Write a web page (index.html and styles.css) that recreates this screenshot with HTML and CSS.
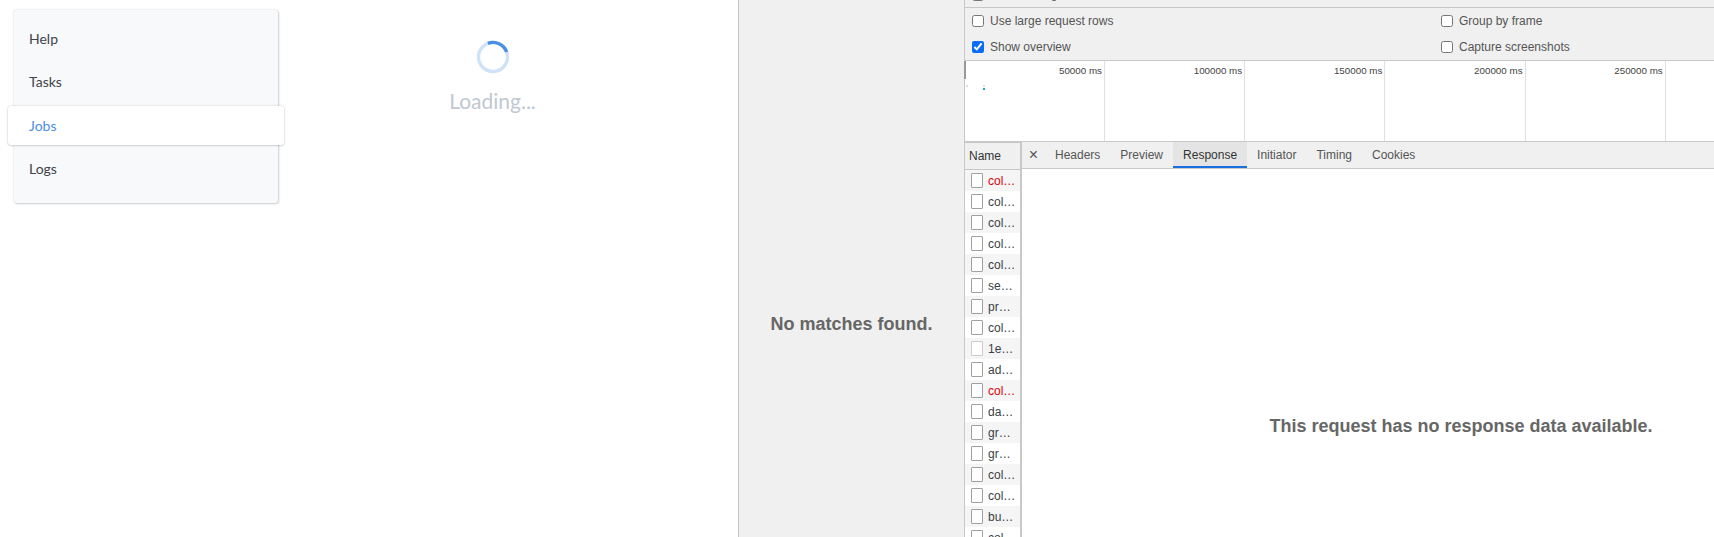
FILE: index.html
```html
<!DOCTYPE html>
<html lang="en">
<head>
<meta charset="utf-8">
<title>Jobs</title>
<link rel="stylesheet" href="styles.css">
</head>
<body>
<div class="page">
  <section class="app">
    <nav class="menu">
      <a class="menu-item">Help</a>
      <a class="menu-item">Tasks</a>
      <a class="menu-item active">Jobs</a>
      <a class="menu-item">Logs</a>
    </nav>
    <div class="loader">
      <svg class="spinner" width="34" height="34" viewBox="0 0 34 34">
        <circle cx="17" cy="17" r="14.5" fill="none" stroke="#cfe3f8" stroke-width="3.4"/>
        <path d="M11.9 3.4A14.5 14.5 0 0 1 30.7 12" fill="none" stroke="#4a90e2" stroke-width="3.4"/>
      </svg>
      <div class="loading-text">Loading...</div>
    </div>
  </section>
  <section class="devtools">
    <div class="side-empty"><span>No matches found.</span></div>
    <div class="main">
      <div class="clip-row">
        <div class="clip-inner"><input type="checkbox"><span>Preserve log</span></div>
      </div>
      <div class="settings">
        <div class="setting-col">
          <label class="setting"><input type="checkbox">Use large request rows</label>
          <label class="setting"><input type="checkbox" checked>Show overview</label>
        </div>
        <div class="setting-col">
          <label class="setting"><input type="checkbox">Group by frame</label>
          <label class="setting"><input type="checkbox">Capture screenshots</label>
        </div>
      </div>
      <div class="overview">
        <div class="tick first">50000 ms</div>
        <div class="tick">100000 ms</div>
        <div class="tick">150000 ms</div>
        <div class="tick">200000 ms</div>
        <div class="tick">250000 ms</div>
        <div class="handle"></div>
        <div class="dot dot-grey"></div>
        <div class="dot dot-grey dot-second"></div>
        <div class="dot dot-teal"></div>
      </div>
      <div class="panes">
        <div class="names">
          <div class="name-head">Name</div>
          <div class="row err"><i class="file"></i><span>col…</span></div>
          <div class="row"><i class="file"></i><span>col…</span></div>
          <div class="row"><i class="file"></i><span>col…</span></div>
          <div class="row"><i class="file"></i><span>col…</span></div>
          <div class="row"><i class="file"></i><span>col…</span></div>
          <div class="row"><i class="file"></i><span>se…</span></div>
          <div class="row"><i class="file"></i><span>pr…</span></div>
          <div class="row"><i class="file"></i><span>col…</span></div>
          <div class="row"><i class="file img"></i><span>1e…</span></div>
          <div class="row"><i class="file"></i><span>ad…</span></div>
          <div class="row err"><i class="file"></i><span>col…</span></div>
          <div class="row"><i class="file"></i><span>da…</span></div>
          <div class="row"><i class="file"></i><span>gr…</span></div>
          <div class="row"><i class="file"></i><span>gr…</span></div>
          <div class="row"><i class="file"></i><span>col…</span></div>
          <div class="row"><i class="file"></i><span>col…</span></div>
          <div class="row"><i class="file"></i><span>bu…</span></div>
          <div class="row"><i class="file"></i><span>col…</span></div>
        </div>
        <div class="detail">
          <div class="tabs">
            <span class="close">×</span>
            <span class="tab">Headers</span>
            <span class="tab">Preview</span>
            <span class="tab current">Response</span>
            <span class="tab">Initiator</span>
            <span class="tab">Timing</span>
            <span class="tab">Cookies</span>
          </div>
          <div class="no-data"><span>This request has no response data available.</span></div>
        </div>
      </div>
    </div>
  </section>
</div>
</body>
</html>
```

FILE: styles.css
```css
* { box-sizing: border-box; }
html, body { margin: 0; height: 537px; overflow: hidden; background: #fff; }
.page { display: flex; height: 537px; font-family: "Liberation Sans", Arial, sans-serif; }

.app { width: 738px; flex: none; display: flex; font-family: Lato, sans-serif; }
.menu {
  margin: 10px 0 0 14px; width: 264px; height: 193px; flex: none;
  padding: 6.5px 0; background: #f8f9fb; border-radius: 3px;
  box-shadow: 0 0 2px rgba(40, 50, 70, .22), 1px 1px 2px rgba(40, 50, 70, .18);
}
.menu-item {
  display: flex; align-items: center; height: 43.5px; padding-left: 15px;
  font-size: 14px; color: #3e4349;
}
.menu-item.active {
  height: 39px; margin: 2px -6px 2.5px -6px; padding-left: 21px;
  background: #fff; color: #4a90e2; border-radius: 3px;
  box-shadow: 0 0 2px rgba(40, 50, 70, .25), 0 1px 2px rgba(40, 50, 70, .14);
}
.loader { flex: 1; display: flex; flex-direction: column; align-items: center; padding: 40px 31px 0 0; }
.spinner { display: block; }
.loading-text { margin-top: 14px; font-size: 21px; color: #c0c8d2; line-height: 26px; }

.devtools {
  flex: 1; display: flex; min-width: 0; background: #f0f0f0;
  border-left: 1px solid #c4c4c4; color: #444;
}
.side-empty {
  width: 225px; flex: none; display: flex; align-items: center; justify-content: center;
  padding-top: 112px; font-size: 18px; font-weight: 700; color: #666;
}
.main { flex: 1; min-width: 0; display: flex; flex-direction: column; border-left: 1px solid #c8c8c8; }
.clip-row { height: 8px; flex: none; overflow: hidden; border-bottom: 1px solid #c8c8c8; }
.clip-inner { display: flex; gap: 6px; align-items: flex-end; height: 14px; margin: -13px 0 0 7px; font-size: 12px; color: #555; }
.clip-inner input { margin: 0; width: 12px; height: 12px; }
.settings { display: flex; height: 53px; flex: none; border-bottom: 1px solid #c8c8c8; }
.setting-col { display: flex; flex-direction: column; }
.setting-col:first-child { width: 469px; }
.setting { display: flex; align-items: center; gap: 6px; height: 26px; flex: none; padding-left: 7px; font-size: 12px; color: #555; }
.setting input { margin: 0; width: 12px; height: 12px; accent-color: #0b6cf5; }

.overview { display: flex; position: relative; height: 81px; background: #fff; border-bottom: 1px solid #c8c8c8; flex: none; }
.tick {
  width: 140.2px; flex: none; text-align: right; padding: 4px 2px 0 0;
  border-right: 1px solid #e0e0e0; font-size: 9.8px; color: #444;
}
.tick.first { width: 140px; }
.handle { position: absolute; left: -1px; top: 0; width: 2px; height: 18px; background: #999; }
.dot { position: absolute; width: 2px; height: 2px; top: 24px; left: 1px; background: #ddd; }
.dot-second { left: 18px; }
.dot-teal { top: 27px; left: 18px; background: #16a9c6; }

.panes { flex: 1; min-height: 0; display: flex; background: #fff; }
.names { width: 57px; flex: none; overflow: hidden; border-right: 2px solid #c8c8c8; }
.name-head {
  height: 28px; display: flex; align-items: center; padding-left: 4px;
  background: #f0f0f0; font-size: 12px; color: #333;
  border-bottom: 1px solid #c8c8c8; border-top: 1px solid #c8c8c8;
}
.row { display: flex; align-items: center; gap: 5px; height: 21px; padding-left: 6px; font-size: 12px; color: #3a3f47; white-space: nowrap; }
.row:nth-child(even) { background: #f5f5f5; }
.row.err { color: #e0000b; }
.file { width: 12px; height: 15px; flex: none; background: #fff; border: 1px solid #a0a0a0; border-radius: 1px; }
.file.img { border-color: #ccc; }

.detail { flex: 1; min-width: 0; display: flex; flex-direction: column; }
.tabs { height: 27px; flex: none; display: flex; align-items: stretch; background: #f0f0f0; border-bottom: 1px solid #c8c8c8; font-size: 12px; color: #555; }
.close { width: 23px; display: flex; align-items: center; justify-content: center; font-size: 16px; color: #555; }
.tab { display: flex; align-items: center; padding: 0 10px; }
.tab.current { background: #e4e4e4; color: #333; box-shadow: inset 0 -2px 0 #1a6fe0; }
.no-data { flex: 1; display: flex; align-items: center; justify-content: center; padding: 146px 0 0 186px; font-size: 18px; font-weight: 700; color: #666; }
```
